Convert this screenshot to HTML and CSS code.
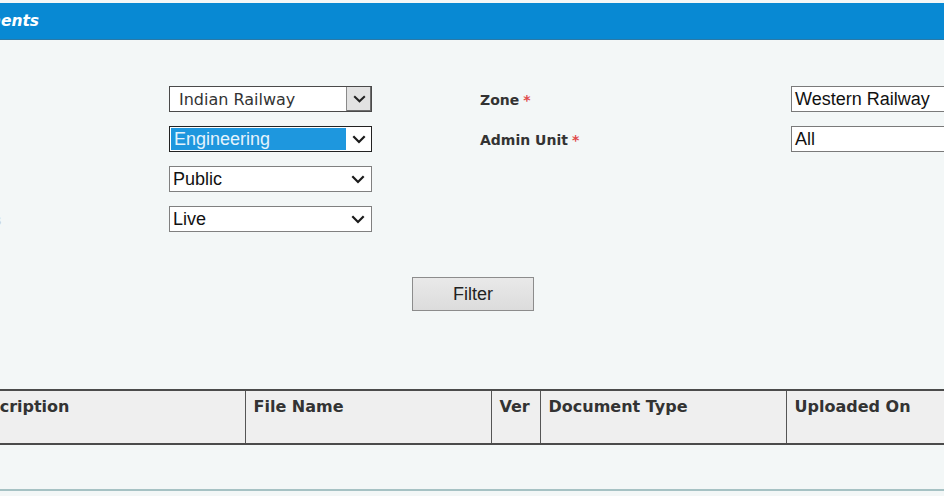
FILE: index.html
```html
<!DOCTYPE html>
<html>
<head>
<meta charset="utf-8">
<link rel="stylesheet" href="styles.css">
</head>
<body>
<div class="page">
  <div class="titlebar">Documents</div>

  <div class="form">
    <div class="lbl lbl-left">Org</div>
    <div class="sel sel-ie">
      <span class="val">Indian Railway</span>
      <span class="btn"><svg width="13" height="8" viewBox="0 0 13 8"><path d="M1.2 1.2 L6.5 6.3 L11.8 1.2" fill="none" stroke="#222" stroke-width="2"/></svg></span>
    </div>
    <div></div>
    <div class="lbl">Zone <span class="req">*</span></div>
    <div class="sel sel-wide"><span class="val">Western Railway</span></div>

    <div class="lbl lbl-left">Dept</div>
    <div class="sel sel-focus">
      <span class="val">Engineering</span>
      <span class="chev"><svg width="14" height="9" viewBox="0 0 14 9"><path d="M1.3 1.3 L7 7 L12.7 1.3" fill="none" stroke="#1a1a1a" stroke-width="2.2"/></svg></span>
    </div>
    <div></div>
    <div class="lbl">Admin Unit <span class="req">*</span></div>
    <div class="sel sel-wide"><span class="val">All</span></div>

    <div class="lbl lbl-left">Type</div>
    <div class="sel">
      <span class="val">Public</span>
      <span class="chev"><svg width="14" height="9" viewBox="0 0 14 9"><path d="M1.3 1.3 L7 7 L12.7 1.3" fill="none" stroke="#1a1a1a" stroke-width="2.2"/></svg></span>
    </div>
    <div></div><div></div><div></div>

    <div class="lbl lbl-left">Status</div>
    <div class="sel">
      <span class="val">Live</span>
      <span class="chev"><svg width="14" height="9" viewBox="0 0 14 9"><path d="M1.3 1.3 L7 7 L12.7 1.3" fill="none" stroke="#1a1a1a" stroke-width="2.2"/></svg></span>
    </div>
    <div></div><div></div><div></div>
  </div>

  <div class="actions">
    <button class="filter" type="button">Filter</button>
  </div>

  <table class="grid">
    <thead>
      <tr>
        <th class="c-desc">Description</th>
        <th class="c-file">File Name</th>
        <th class="c-ver">Ver</th>
        <th class="c-type">Document Type</th>
        <th class="c-up">Uploaded On</th>
      </tr>
    </thead>
  </table>
  <div class="grid-body"></div>
</div>
</body>
</html>
```

FILE: styles.css
```css
html, body {
  margin: 0;
  padding: 0;
}
body {
  background: #f3f7f7;
  overflow: hidden;
  width: 944px;
  height: 496px;
  font-family: "DejaVu Sans", Verdana, sans-serif;
  color: #333;
}
.page {
  margin-left: -200px;
  width: 1346px;
  padding-top: 3px;
}
.titlebar {
  height: 36px;
  line-height: 36px;
  background: #0889d3;
  border-bottom: 1px solid #2b79a6;
  color: #fff;
  font-weight: bold;
  font-style: italic;
  font-size: 15.5px;
  padding-left: 141px;
}
.form {
  margin-top: 46px;
  margin-left: 150px;
  display: grid;
  grid-template-columns: 219px 203px 108px 311px 230px;
  grid-auto-rows: 26px;
  row-gap: 14px;
}
.lbl {
  font-weight: bold;
  font-size: 14px;
  color: #333;
  display: flex;
  align-items: center;
  white-space: nowrap;
  padding-top: 2px;
}
.lbl-left {
  color: #c8cccc;
}
.req {
  color: #e04a4a;
  margin-left: 4px;
}
.sel {
  display: flex;
  align-items: center;
  height: 26px;
  box-sizing: border-box;
  border: 1px solid #808080;
  background: #fff;
  font-family: "Liberation Sans", Arial, sans-serif;
  font-size: 18px;
  color: #111;
}
.sel .val {
  flex: 1;
  padding-left: 3px;
  white-space: nowrap;
}
.sel .chev {
  width: 26px;
  display: flex;
  justify-content: center;
  align-items: center;
}
.sel-ie {
  border-color: #4a4a4a;
  font-family: "DejaVu Sans", Verdana, sans-serif;
  font-size: 16px;
  color: #333;
}
.sel-ie .val {
  padding-left: 9px;
}
.sel-ie .btn {
  width: 25px;
  height: 24px;
  box-sizing: border-box;
  background: #e2e2e2;
  border-left: 1px solid #8a8a8a;
  box-shadow: inset -1px -1px 0 #6d6d6d;
  display: flex;
  justify-content: center;
  align-items: center;
}
.sel-focus {
  border-color: #222;
}
.sel-focus .val {
  flex: 0 0 172px;
  margin-left: 1px;
  height: 22px;
  line-height: 22px;
  background: #1e97de;
  color: #e4f3fc;
}
.sel-focus .chev {
  flex: 1;
}
.sel-wide {
  border-color: #7a7a7a;
}
.actions {
  margin-top: 45px;
  display: flex;
  justify-content: center;
}
.filter {
  width: 122px;
  height: 34px;
  box-sizing: border-box;
  border: 1px solid #8c8c8c;
  background: linear-gradient(#e9e9e9, #dcdcdc);
  font-family: "Liberation Sans", Arial, sans-serif;
  font-size: 18px;
  color: #222;
  padding: 0;
}
.grid {
  margin-top: 78px;
  margin-left: 158px;
  border-collapse: collapse;
  table-layout: fixed;
  width: 1120px;
}
.grid th {
  height: 54px;
  box-sizing: border-box;
  background: #efefef;
  border-top: 2px solid #4b4b4b;
  border-bottom: 2px solid #4b4b4b;
  border-left: 1px solid #555;
  text-align: left;
  vertical-align: top;
  padding: 6px 8px 0 8px;
  font-size: 16px;
  font-weight: bold;
  color: #333;
  white-space: nowrap;
}
.grid th.c-desc { width: 287px; border-left: none; }
.grid th.c-file { width: 246px; }
.grid th.c-ver { width: 49px; }
.grid th.c-type { width: 246px; }
.grid th.c-up { width: 292px; }
.grid-body {
  height: 44px;
  border-bottom: 2px solid #a6c2c4;
}
```
